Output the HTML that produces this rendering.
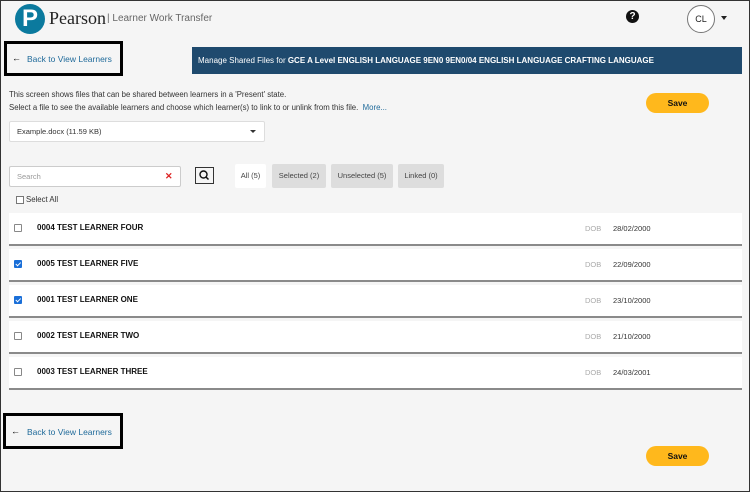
<!DOCTYPE html>
<html><head><style>
body{margin:0;width:750px;height:492px;overflow:hidden;font-family:"Liberation Sans",sans-serif;}
.page{position:absolute;left:0;top:0;width:748px;height:490px;border:1px solid #333;background:#f5f5f5;}
.a{position:absolute;}
.back{border:3px solid #000;box-sizing:border-box;font-size:8.5px;color:#1f6a9a;}
.back span{position:absolute;left:5px;color:#000;font-size:9px;}
.save{background:#ffb81c;border-radius:10px;font-size:8.5px;font-weight:bold;text-align:center;color:#111;}
.row{position:absolute;left:8px;width:733px;height:31px;background:#fff;border-bottom:2px solid #8a8a8a;}
.row .cb{position:absolute;left:5px;top:11px;width:6px;height:6px;border:1px solid #888;border-radius:1px;background:#fff;}
.row .cb.on{background:#1a6fd8;border-color:#1a6fd8;}
.row .cb.on:after{content:"";position:absolute;left:2px;top:0px;width:1.5px;height:3.5px;border:solid #fff;border-width:0 1px 1px 0;transform:rotate(45deg);}
.row .n{position:absolute;left:28px;top:10px;font-size:8px;font-weight:bold;color:#111;}
.row .d{position:absolute;left:576px;top:11px;font-size:7.5px;color:#aaa;}
.row .v{position:absolute;left:604px;top:11px;font-size:7.5px;color:#333;}
.tab{position:absolute;top:163px;height:24px;line-height:24px;font-size:7.5px;color:#444;text-align:center;background:#ddd;border-radius:2px;}
</style></head><body><div class="page">
<div class="a" style="left:14px;top:3px;width:30px;height:30px;border-radius:50%;background:#0b7a9e;color:#fff;font-weight:bold;font-size:24px;text-align:center;line-height:30px;">P</div>
<div class="a" style="left:48px;top:7px;font-family:'Liberation Serif',serif;font-size:18px;color:#222;">Pearson</div>
<div class="a" style="left:106px;top:12px;font-size:10px;color:#666;">| Learner Work Transfer</div>
<div class="a" style="left:625px;top:9px;width:13px;height:13px;border-radius:50%;background:#111;color:#fff;font-size:10px;font-weight:bold;text-align:center;line-height:13px;">?</div>
<div class="a" style="left:686px;top:4px;width:26px;height:26px;border:1px solid #777;border-radius:50%;background:#fff;font-size:9px;text-align:center;line-height:26px;color:#222;">CL</div>
<div class="a" style="left:720px;top:15px;width:0;height:0;border:3px solid transparent;border-top:4px solid #222;"></div>
<div class="a back" style="left:3px;top:40px;width:119px;height:35px;"><span style="top:9px;">←</span><div class="a" style="left:20px;top:10px;">Back to View Learners</div></div>
<div class="a" style="left:191px;top:46px;width:550px;height:27px;background:#1f4a6e;color:#fff;font-size:8px;line-height:27px;padding-left:6px;box-sizing:border-box;white-space:nowrap;">Manage Shared Files for <b>GCE A Level ENGLISH LANGUAGE 9EN0 9EN0/04 ENGLISH LANGUAGE CRAFTING LANGUAGE</b></div>
<div class="a" style="left:8px;top:87px;font-size:7.8px;color:#333;line-height:13px;white-space:nowrap;">This screen shows files that can be shared between learners in a 'Present' state.<br>Select a file to see the available learners and choose which learner(s) to link to or unlink from this file. &nbsp;<span style="color:#1f6a9a">More...</span></div>
<div class="a save" style="left:645px;top:92px;width:63px;height:20px;line-height:20px;">Save</div>
<div class="a" style="left:8px;top:120px;width:256px;height:21px;background:#fff;border:1px solid #ddd;border-radius:2px;box-sizing:border-box;font-size:7.5px;color:#333;line-height:19px;padding-left:7px;">Example.docx (11.59 KB)<div class="a" style="right:8px;top:8px;border:3px solid transparent;border-top:3px solid #333;"></div></div>
<div class="a" style="left:8px;top:165px;width:172px;height:21px;background:#fff;border:1px solid #ccc;border-radius:2px;box-sizing:border-box;font-size:7.5px;color:#999;line-height:19px;padding-left:7px;">Search<span style="position:absolute;left:155px;color:#d22;font-weight:bold;font-size:9px;">✕</span></div>
<div class="a" style="left:194px;top:166px;width:19px;height:17px;border:1px solid #333;box-sizing:border-box;background:#f5f5f5;">
<svg width="17" height="15" viewBox="0 0 17 15"><circle cx="7.5" cy="6.5" r="3.5" fill="none" stroke="#111" stroke-width="1.4"/><line x1="10" y1="9" x2="12.5" y2="11.5" stroke="#111" stroke-width="1.5"/></svg></div>
<div class="tab" style="left:234px;width:31px;background:#fff;">All (5)</div>
<div class="tab" style="left:271px;width:54px;">Selected (2)</div>
<div class="tab" style="left:330px;width:62px;">Unselected (5)</div>
<div class="tab" style="left:397px;width:46px;">Linked (0)</div>
<div class="a" style="left:15px;top:195px;width:6px;height:6px;border:1px solid #777;background:#fff;"></div>
<div class="a" style="left:25px;top:194px;font-size:7.8px;color:#333;">Select All</div>
<div class="row" style="top:212px;"><div class="cb"></div><div class="n">0004 TEST LEARNER FOUR</div><div class="d">DOB</div><div class="v">28/02/2000</div></div>
<div class="row" style="top:248px;"><div class="cb on"></div><div class="n">0005 TEST LEARNER FIVE</div><div class="d">DOB</div><div class="v">22/09/2000</div></div>
<div class="row" style="top:284px;"><div class="cb on"></div><div class="n">0001 TEST LEARNER ONE</div><div class="d">DOB</div><div class="v">23/10/2000</div></div>
<div class="row" style="top:320px;"><div class="cb"></div><div class="n">0002 TEST LEARNER TWO</div><div class="d">DOB</div><div class="v">21/10/2000</div></div>
<div class="row" style="top:356px;"><div class="cb"></div><div class="n">0003 TEST LEARNER THREE</div><div class="d">DOB</div><div class="v">24/03/2001</div></div>
<div class="a back" style="left:2px;top:412px;width:120px;height:36px;"><span style="top:10px;">←</span><div class="a" style="left:21px;top:11px;">Back to View Learners</div></div>
<div class="a save" style="left:645px;top:445px;width:63px;height:20px;line-height:20px;">Save</div>
</div></body></html>
